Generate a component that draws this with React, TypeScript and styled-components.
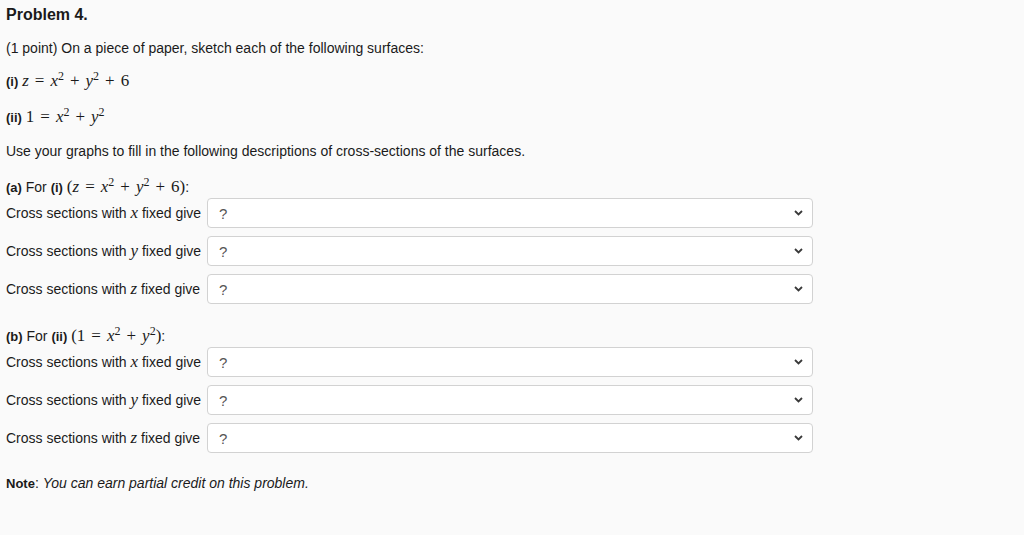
import React from 'react';
import styled, { createGlobalStyle } from 'styled-components';

const Global = createGlobalStyle`
  html, body {
    margin: 0;
    padding: 0;
    background: #fafafa;
  }
  body {
    font-family: "Liberation Sans", Arial, sans-serif;
    color: #1a1a1a;
  }
`;

const Page = styled.div`
  padding: 6px 0 0 6px;
  width: 1024px;
  height: 535px;
  box-sizing: border-box;
  overflow: hidden;
`;

const Title = styled.div`
  font-size: 16px;
  font-weight: bold;
  line-height: 18px;
`;

const Line = styled.div<{ $top: number }>`
  margin-top: ${(p) => p.$top}px;
  font-size: 14px;
  line-height: 18px;
  height: 18px;
  white-space: nowrap;
`;

const B = styled.b`
  font-weight: bold;
  font-size: 13px;
`;

const Math = styled.span`
  font-family: "Liberation Serif", "Times New Roman", serif;
  font-size: 17px;
`;

const V = styled.i`
  font-family: "Liberation Serif", "Times New Roman", serif;
  font-style: italic;
  font-size: 17px;
`;

const Sup = styled.sup`
  font-size: 12px;
  vertical-align: 6px;
  line-height: 0;
`;

const Op = styled.span`
  padding: 0 6px;
`;

const Row = styled.div<{ $top: number }>`
  display: flex;
  align-items: center;
  margin-top: ${(p) => p.$top}px;
  height: 30px;
  font-size: 14px;
`;

const Label = styled.div`
  width: 201px;
  white-space: nowrap;
`;

const Select = styled.div`
  width: 606px;
  height: 30px;
  box-sizing: border-box;
  border: 1px solid #d2d2d2;
  border-radius: 4px;
  background: #fff;
  display: flex;
  align-items: center;
  justify-content: space-between;
  padding: 0 9px 0 11px;
  font-size: 15px;
  color: #555;
`;

const Italic = styled.i`
  font-style: italic;
`;

const Chevron = () => (
  <svg width="9" height="6" viewBox="0 0 9 6">
    <polyline points="1,1 4.5,4.5 8,1" fill="none" stroke="#3a3a3a" strokeWidth="1.8" />
  </svg>
);

const Question = ({ v, top = 8 }: { v: string; top?: number }) => (
  <Row $top={top}>
    <Label>
      Cross sections with <V>{v}</V> fixed give
    </Label>
    <Select>
      <span>?</span>
      <Chevron />
    </Select>
  </Row>
);

const App = () => {
  const vars = ['x', 'y', 'z'];
  return (
    <Page>
      <Global />
      <Title>Problem 4.</Title>
      <Line $top={15}>(1 point) On a piece of paper, sketch each of the following surfaces:</Line>
      <Line $top={15}>
        <B>(i)</B>{' '}
        <Math>
          <V>z</V>
          <Op>=</Op>
          <V>x</V>
          <Sup>2</Sup>
          <Op>+</Op>
          <V>y</V>
          <Sup>2</Sup>
          <Op>+</Op>6
        </Math>
      </Line>
      <Line $top={18}>
        <B>(ii)</B>{' '}
        <Math>
          1<Op>=</Op>
          <V>x</V>
          <Sup>2</Sup>
          <Op>+</Op>
          <V>y</V>
          <Sup>2</Sup>
        </Math>
      </Line>
      <Line $top={16}>Use your graphs to fill in the following descriptions of cross-sections of the surfaces.</Line>
      <Line $top={18}>
        <B>(a)</B> For <B>(i)</B>{' '}
        <Math>
          (<V>z</V>
          <Op>=</Op>
          <V>x</V>
          <Sup>2</Sup>
          <Op>+</Op>
          <V>y</V>
          <Sup>2</Sup>
          <Op>+</Op>6)
        </Math>
        :
      </Line>
      {vars.map((v, i) => (
        <Question key={'a' + v} v={v} top={i === 0 ? 2 : 8} />
      ))}
      <Line $top={23}>
        <B>(b)</B> For <B>(ii)</B>{' '}
        <Math>
          (1<Op>=</Op>
          <V>x</V>
          <Sup>2</Sup>
          <Op>+</Op>
          <V>y</V>
          <Sup>2</Sup>)
        </Math>
        :
      </Line>
      {vars.map((v, i) => (
        <Question key={'b' + v} v={v} top={i === 0 ? 2 : 8} />
      ))}
      <Line $top={21}>
        <B>Note</B>: <Italic>You can earn partial credit on this problem.</Italic>
      </Line>
    </Page>
  );
};

export default App;
